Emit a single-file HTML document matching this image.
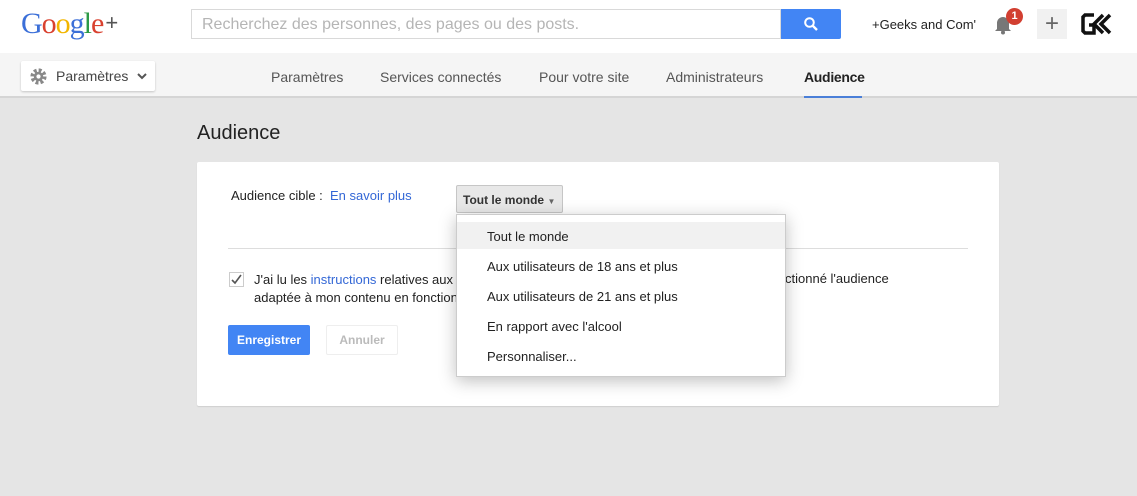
<!DOCTYPE html>
<html><head><meta charset="utf-8"><style>
*{margin:0;padding:0;box-sizing:border-box}
body{width:1137px;height:496px;overflow:hidden;background:#e5e5e5;font-family:"Liberation Sans",Arial,sans-serif;position:relative}
.a{position:absolute}
a{color:#3367d6;text-decoration:none}
</style></head><body>
<div class="a" style="left:0;top:0;width:1137px;height:53px;background:#fff"></div>
<div class="a" style="left:21px;top:7px;font-family:'Liberation Serif',serif;font-size:30px;letter-spacing:-1px"><span style="color:#3b6fd8">G</span><span style="color:#d9412f">o</span><span style="color:#f2b600">o</span><span style="color:#3b6fd8">g</span><span style="color:#2c9a47">l</span><span style="color:#d9412f">e</span><span style="color:#555;font-family:'Liberation Sans';font-size:22px;position:relative;top:-3px;margin-left:2px">+</span></div>
<div class="a" style="left:191px;top:9px;width:590px;height:30px;border:1px solid #d9d9d9;color:#b5b5b5;font-size:16px;padding:6px 10px">Recherchez des personnes, des pages ou des posts.</div>
<div class="a" style="left:781px;top:9px;width:60px;height:30px;background:#4285f4;border-radius:0 2px 2px 0">
<svg class="a" style="left:22px;top:7px" width="16" height="16" viewBox="0 0 16 16"><circle cx="6.5" cy="6.5" r="4.3" fill="none" stroke="#fff" stroke-width="2"/><path d="M9.5 9.5L14 14" stroke="#fff" stroke-width="2.4"/></svg></div>
<div class="a" style="left:872px;top:17px;font-size:13px;color:#222">+Geeks and Com'</div>
<svg class="a" style="left:994px;top:13px" width="20" height="22" viewBox="0 0 20 22"><path d="M3 16V10a6 6 0 0 1 12 0v6l2 2H1z" fill="#777"/><circle cx="9" cy="19.5" r="2" fill="#777"/></svg>
<div class="a" style="left:1006px;top:8px;width:17px;height:17px;border-radius:50%;background:#d23f31;color:#fff;font-size:11px;font-weight:bold;text-align:center;line-height:17px">1</div>
<div class="a" style="left:1037px;top:9px;width:30px;height:30px;background:#f1f1f1;color:#666;font-size:24px;text-align:center;line-height:30px">+</div>
<svg class="a" style="left:1081px;top:13px" width="32" height="22" viewBox="0 0 32 22"><path d="M13 2H4L2 4v14l2 2h9v-8H8" fill="none" stroke="#111" stroke-width="3.5"/><path d="M29 2L20 11l9 9M22 2l-9 9 9 9" fill="none" stroke="#111" stroke-width="3.5"/></svg>
<div class="a" style="left:0;top:53px;width:1137px;height:45px;background:#f5f5f5;border-bottom:2px solid #d5d5d5"></div>
<div class="a" style="left:21px;top:61px;width:134px;height:30px;background:#fff;border-radius:2px;box-shadow:0 1px 2px rgba(0,0,0,.2);font-size:14px;color:#444;padding:7px 0 0 35px">Paramètres</div>
<svg class="a" style="left:29px;top:67px" width="19" height="19" viewBox="0 0 20 20"><circle cx="10" cy="10" r="6.5" fill="none" stroke="#888" stroke-width="4" stroke-dasharray="3 2.1"/><circle cx="10" cy="10" r="5" fill="#888"/><circle cx="10" cy="10" r="2.2" fill="#fff"/></svg>
<svg class="a" style="left:137px;top:72px" width="10" height="8"><path d="M1 2l4 4 4-4" fill="none" stroke="#555" stroke-width="2"/></svg>
<div class="a" style="top:69px;font-size:14px;color:#555;left:271px">Paramètres</div>
<div class="a" style="top:69px;font-size:14px;color:#555;left:380px">Services connectés</div>
<div class="a" style="top:69px;font-size:14px;color:#555;left:539px">Pour votre site</div>
<div class="a" style="top:69px;font-size:14px;color:#555;left:666px">Administrateurs</div>
<div class="a" style="top:69px;font-size:14px;color:#222;font-weight:bold;left:804px;letter-spacing:-0.3px">Audience</div>
<div class="a" style="left:804px;top:96px;width:58px;height:2px;background:#4a7fd8"></div>
<div class="a" style="left:197px;top:122px;font-size:20px;color:#222">Audience</div>
<div class="a" style="left:197px;top:162px;width:802px;height:244px;background:#fff;border-radius:2px;box-shadow:0 1px 1px rgba(0,0,0,.1)"></div>
<div class="a" style="left:231px;top:188px;font-size:13px;color:#222">Audience cible :&nbsp; <a>En savoir plus</a></div>
<div class="a" style="left:456px;top:185px;width:107px;height:28px;background:#e8e8e8;border:1px solid #c6c6c6;border-radius:2px;font-size:12px;font-weight:bold;color:#333;padding:7px 0 0 6px">Tout le monde <span style="font-size:8px;color:#666">▼</span></div>
<div class="a" style="left:228px;top:248px;width:740px;height:1px;background:#ddd"></div>
<svg class="a" style="left:229px;top:272px" width="16" height="16"><rect x=".5" y=".5" width="14" height="14" fill="#fff" stroke="#ccc"/><path d="M3 8l3 3 6-8" fill="none" stroke="#555" stroke-width="1.6"/></svg>
<div class="a" style="left:254px;top:271px;font-size:13px;color:#222;line-height:18px">J'ai lu les <a>instructions</a> relatives aux<br>adaptée à mon contenu en fonction</div>
<div class="a" style="left:785px;top:271px;font-size:13px;color:#222">ctionné l'audience</div>
<div class="a" style="left:228px;top:325px;width:82px;height:30px;background:#4285f4;border-radius:2px;color:#fff;font-size:12px;font-weight:bold;text-align:center;line-height:30px">Enregistrer</div>
<div class="a" style="left:326px;top:325px;width:72px;height:30px;border:1px solid #eee;border-radius:2px;color:#bbb;font-size:12px;font-weight:bold;text-align:center;line-height:28px">Annuler</div>
<div class="a" style="left:456px;top:214px;width:330px;height:163px;background:#fff;border:1px solid #ccc;box-shadow:0 4px 16px rgba(0,0,0,.25);font-size:13px;color:#222">
<div style="height:34px;padding:15px 0 0 30px;line-height:13px;background:linear-gradient(#fff 0,#fff 7px,#f1f1f1 7px,#f1f1f1 100%)">Tout le monde</div>
<div style="height:30px;padding:10px 0 0 30px">Aux utilisateurs de 18 ans et plus</div>
<div style="height:30px;padding:10px 0 0 30px">Aux utilisateurs de 21 ans et plus</div>
<div style="height:30px;padding:10px 0 0 30px">En rapport avec l'alcool</div>
<div style="height:30px;padding:10px 0 0 30px">Personnaliser...</div>
</div>
</body></html>
